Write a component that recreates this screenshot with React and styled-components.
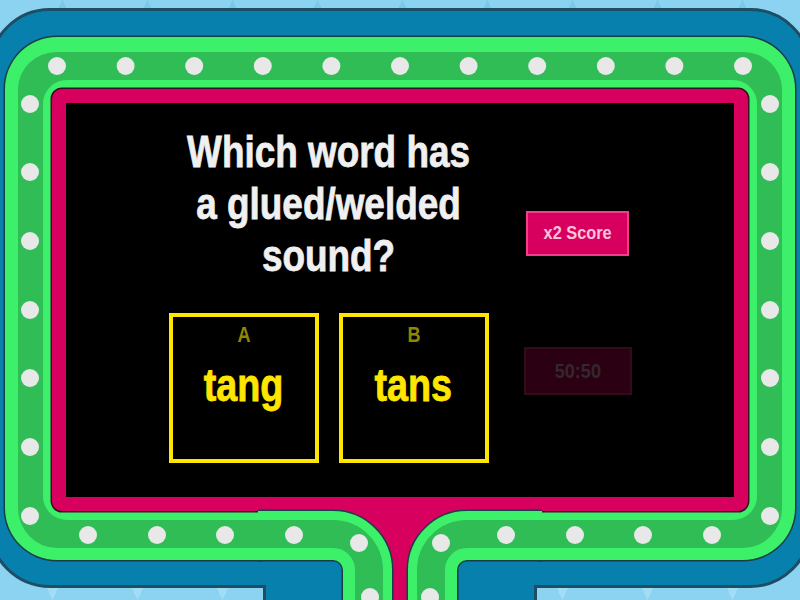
import React from 'react';
import styled, { createGlobalStyle } from 'styled-components';

const GlobalStyle = createGlobalStyle`
  html, body {
    margin: 0;
    padding: 0;
    background: #8bd3f1;
  }
  * {
    box-sizing: border-box;
  }
`;

const FONT = `"Liberation Sans", Arial, sans-serif`;

const LIGHT_GREEN = '#3df06a';
const DARK_GREEN = '#30bd56';
const PINK = '#d7005e';
const BLUE = '#0780ae';
const NAVY = '#1f4d64';
const OUTLINE = '#1b3d45';

const Page = styled.div`
  position: relative;
  width: 800px;
  height: 600px;
  overflow: hidden;
  padding-top: 8px;
  background:
    conic-gradient(from 155deg at 50% 0, #7bc8e8 0 50deg, transparent 0) 20px 0 / 85px 40px repeat-x,
    conic-gradient(from -25deg at 50% 100%, #a3ddf4 0 50deg, transparent 0) 10px 100% / 85px 30px repeat-x,
    #8bd3f1;
`;

const BluePanel = styled.div`
  margin-left: -12px;
  width: 824px;
  height: 580px;
  border: 3px solid ${NAVY};
  border-radius: 62px;
  background: ${BLUE};
  padding: 26px 0 0 14px;
`;

const GreenFrame = styled.div`
  width: 790px;
  height: 523px;
  border-style: solid;
  border-color: ${LIGHT_GREEN};
  border-width: 15px 13px 12px 13px;
  border-radius: 52px;
  background: ${DARK_GREEN};
  box-shadow: 0 0 0 1.5px ${OUTLINE};
  padding: 28px 0 0 25px;
`;

const InnerRing = styled.div`
  width: 714px;
  height: 440px;
  border: 9px solid ${LIGHT_GREEN};
  border-radius: 24px;
`;

const Screen = styled.div`
  width: 100%;
  height: 100%;
  border: 14px solid ${PINK};
  border-radius: 10px;
  background: #000;
  box-shadow: 0 0 0 1.5px #3a1026;
  display: flex;
  align-items: center;
  justify-content: center;
  gap: 35px;
  font-family: ${FONT};
  font-weight: 700;
`;

/* Arial Narrow look: Liberation Sans Bold squeezed sideways, with a hair of stroke for weight */
const Squeeze = styled.span`
  display: inline-block;
  transform: scaleX(${(p) => p.$x || 0.82});
  -webkit-text-stroke: ${(p) => p.$stroke || 0}px currentColor;
  white-space: nowrap;
`;

const QuestionColumn = styled.div`
  width: 320px;
  display: flex;
  flex-direction: column;
  align-items: center;
  margin-bottom: 11px;
`;

const Question = styled.div`
  color: #f0f0f0;
  font-size: 45px;
  line-height: 52px;
  text-align: center;
`;

const Answers = styled.div`
  display: flex;
  gap: 20px;
  margin-top: 31px;
`;

const AnswerBox = styled.div`
  width: 150px;
  height: 150px;
  border: 4px solid #ffe600;
  display: flex;
  flex-direction: column;
  align-items: center;
`;

const AnswerLetter = styled.div`
  margin-top: 7px;
  color: #8f8700;
  font-size: 22px;
  line-height: 22px;
`;

const AnswerWord = styled.div`
  margin-top: 14px;
  color: #ffe600;
  font-size: 46px;
  line-height: 50px;
`;

const PowerColumn = styled.div`
  width: 108px;
  margin-top: 5px;
  display: flex;
  flex-direction: column;
  align-items: center;
  gap: 91px;
`;

const PowerButton = styled.div`
  width: ${(p) => p.$w}px;
  height: ${(p) => p.$h}px;
  background: ${PINK};
  border: 2px solid #f43d88;
  color: #f9c3da;
  font-size: ${(p) => p.$size}px;
  display: flex;
  align-items: center;
  justify-content: center;
  opacity: ${(p) => (p.$disabled ? 0.2 : 1)};
`;

const Lights = styled.svg`
  position: absolute;
  top: 0;
  left: 0;
  width: 800px;
  height: 600px;
  pointer-events: none;
`;

const topDots = Array.from({ length: 11 }, (_, i) => [57 + i * 68.6, 66]);
const sideY = [104, 172, 241, 310, 378, 447, 516];
const sideDots = sideY.flatMap((y) => [[30, y], [770, y]]);
const bottomDots = [88, 157, 225, 294].flatMap((x) => [[x, 535], [800 - x, 535]]);
const stemDots = [[359, 543], [441, 543], [370, 597], [430, 597]];
const dots = [...topDots, ...sideDots, ...bottomDots, ...stemDots];

// track turning down beside the stem: outer band, then the darker lane inside it
const tracks = [
  {
    band: 'M 258 535.5 H 333 A 34.5 34.5 0 0 1 367.5 570 V 620',
    lane: 'M 258 534 H 333 A 36 36 0 0 1 369 570 V 620',
  },
  {
    band: 'M 542 535.5 H 467 A 34.5 34.5 0 0 0 432.5 570 V 620',
    lane: 'M 542 534 H 467 A 36 36 0 0 0 431 570 V 620',
  },
];

function Marquee() {
  return (
    <Lights viewBox="0 0 800 600">
      <rect x="258" y="505" width="284" height="56" fill={PINK} />
      <rect x="263" y="560" width="274" height="40" fill={BLUE} />
      <rect x="263" y="585" width="3" height="15" fill={NAVY} />
      <rect x="534" y="585" width="3" height="15" fill={NAVY} />
      <rect x="370" y="540" width="60" height="60" fill={PINK} />
      {tracks.map((t) => (
        <g key={t.band} fill="none">
          <path d={t.band} stroke={OUTLINE} strokeWidth="52" />
          <path d={t.band} stroke={LIGHT_GREEN} strokeWidth="49" />
          <path d={t.lane} stroke={DARK_GREEN} strokeWidth="28" />
        </g>
      ))}
      {dots.map(([x, y], i) => (
        <circle key={i} cx={x} cy={y} r="9" fill="#e8e8e8" />
      ))}
    </Lights>
  );
}

export default function App() {
  return (
    <>
      <GlobalStyle />
      <Page>
        <BluePanel>
          <GreenFrame>
            <InnerRing>
              <Screen>
                <QuestionColumn>
                  <Question>
                    <Squeeze $stroke={0.8}>
                      Which word has
                      <br />
                      a glued/welded
                      <br />
                      sound?
                    </Squeeze>
                  </Question>
                  <Answers>
                    <AnswerBox>
                      <AnswerLetter>
                        <Squeeze>A</Squeeze>
                      </AnswerLetter>
                      <AnswerWord>
                        <Squeeze $stroke={0.8}>tang</Squeeze>
                      </AnswerWord>
                    </AnswerBox>
                    <AnswerBox>
                      <AnswerLetter>
                        <Squeeze>B</Squeeze>
                      </AnswerLetter>
                      <AnswerWord>
                        <Squeeze $stroke={0.8}>tans</Squeeze>
                      </AnswerWord>
                    </AnswerBox>
                  </Answers>
                </QuestionColumn>
                <PowerColumn>
                  <PowerButton $w={103} $h={45} $size={19}>
                    <Squeeze $x={0.86}>x2 Score</Squeeze>
                  </PowerButton>
                  <PowerButton $w={108} $h={48} $size={21} $disabled>
                    <Squeeze $x={0.86}>50:50</Squeeze>
                  </PowerButton>
                </PowerColumn>
              </Screen>
            </InnerRing>
          </GreenFrame>
        </BluePanel>
        <Marquee />
      </Page>
    </>
  );
}
